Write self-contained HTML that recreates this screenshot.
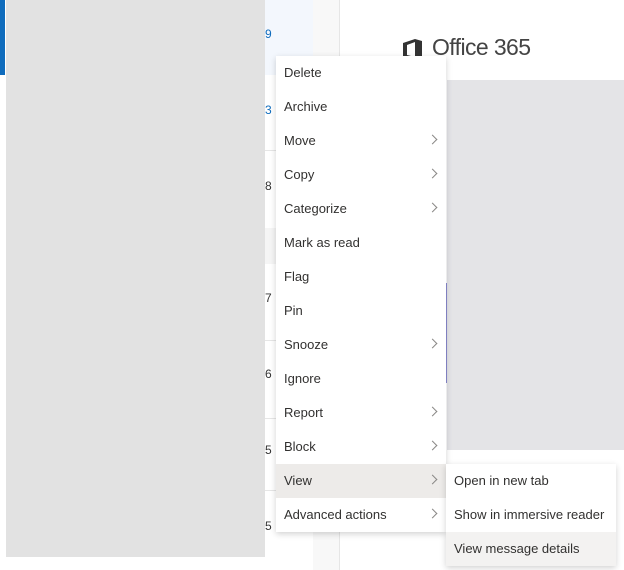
<!DOCTYPE html><html><head><style>
body{margin:0;width:624px;height:570px;position:relative;overflow:hidden;background:#fff;font-family:"Segoe UI","Liberation Sans",sans-serif}
div{position:absolute;box-sizing:border-box}
.m{left:276px;top:56px;width:170px;height:476px;background:#fff;box-shadow:0 2px 6px rgba(0,0,0,.18)}
.i{left:0;width:170px;height:34px;font-size:13px;color:#323130;padding-left:8px;line-height:34px}
.a{position:absolute;right:10px;top:12px;width:6px;height:6px;border-right:1px solid #8a8886;border-top:1px solid #8a8886;transform:rotate(45deg)}
.n{position:absolute;left:265px;font-size:12px;color:#0f6cbd}
</style></head><body>
<div style="left:0;top:0;width:5px;height:75px;background:#0f6cbd"></div>
<div style="left:265px;top:0;width:50px;height:75px;background:#f3f7fd"></div>
<div style="left:313px;top:0;width:27px;height:570px;background:#f8f8f8;border-right:1px solid #e6e6e6"></div>
<div style="left:265px;top:150px;width:48px;height:1px;background:#e6e6e6"></div>
<div style="left:265px;top:228px;width:48px;height:36px;background:#f5f5f5"></div>
<div style="left:265px;top:340px;width:48px;height:1px;background:#e6e6e6"></div>
<div style="left:265px;top:418px;width:48px;height:1px;background:#e6e6e6"></div>
<div style="left:265px;top:490px;width:48px;height:1px;background:#e6e6e6"></div>
<div style="left:6px;top:0;width:259px;height:557px;background:#e2e2e2"></div>
<span class="n" style="top:27px">9</span><span class="n" style="top:103px">3</span><span class="n" style="top:179px;color:#333">8</span><span class="n" style="top:291px;color:#333">7</span><span class="n" style="top:367px;color:#333">6</span><span class="n" style="top:443px;color:#333">5</span><span class="n" style="top:519px;color:#333">5</span>
<div style="left:401px;top:38px;width:23px;height:22px"><svg width="23" height="22"><path d="M2 5 L14 1 L21 3 L21 19 L14 21 L2 18 Z M6 7 L6 17 L14 19 L14 4 Z" fill="#333" fill-rule="evenodd"/></svg></div>
<div style="left:432px;top:34px;font-size:23px;color:#444;letter-spacing:-0.6px">Office 365</div>
<div style="left:447px;top:80px;width:177px;height:370px;background:#e4e4e7"></div>
<div style="left:446px;top:283px;width:1px;height:100px;background:#8a8ad0"></div>
<div class="m">
<div class="i" style="top:0">Delete</div>
<div class="i" style="top:34px">Archive</div>
<div class="i" style="top:68px">Move<span class="a"></span></div>
<div class="i" style="top:102px">Copy<span class="a"></span></div>
<div class="i" style="top:136px">Categorize<span class="a"></span></div>
<div class="i" style="top:170px">Mark as read</div>
<div class="i" style="top:204px">Flag</div>
<div class="i" style="top:238px">Pin</div>
<div class="i" style="top:272px">Snooze<span class="a"></span></div>
<div class="i" style="top:306px">Ignore</div>
<div class="i" style="top:340px">Report<span class="a"></span></div>
<div class="i" style="top:374px">Block<span class="a"></span></div>
<div class="i" style="top:408px;background:#edebe9">View<span class="a"></span></div>
<div class="i" style="top:442px">Advanced actions<span class="a"></span></div>
</div>
<div class="m" style="left:446px;top:464px;width:170px;height:102px">
<div class="i" style="top:0">Open in new tab</div>
<div class="i" style="top:34px">Show in immersive reader</div>
<div class="i" style="top:68px;background:#f3f2f1">View message details</div>
</div>
</body></html>
